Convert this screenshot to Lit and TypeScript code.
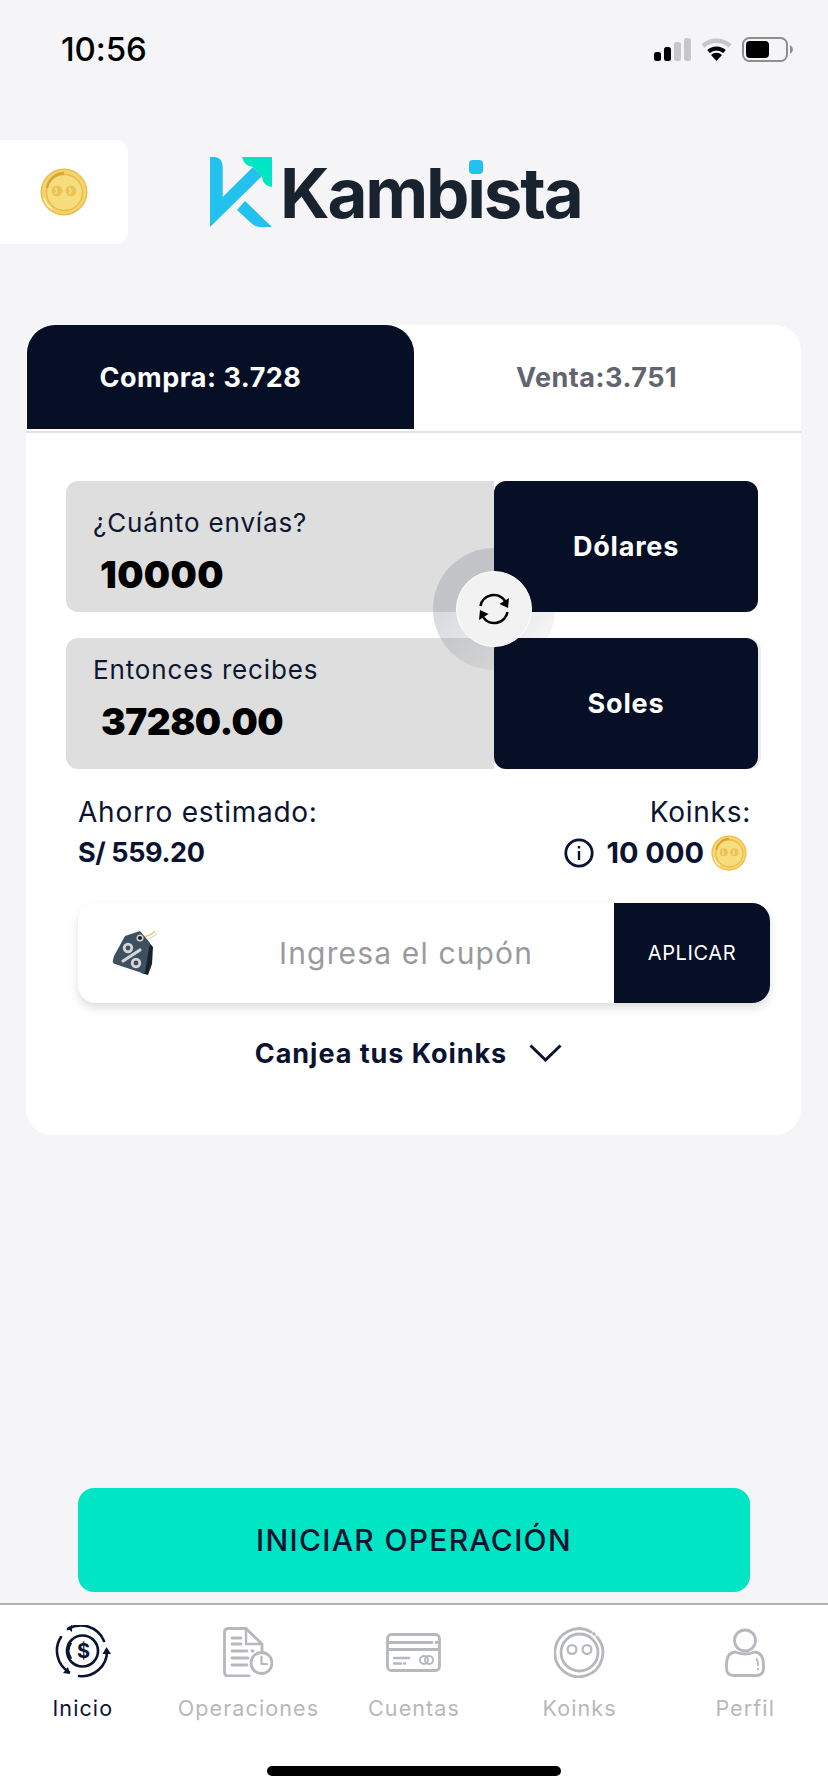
import { LitElement, html, css, svg } from "lit";
import { customElement } from "lit/decorators.js";

const coin = (size: number) => html`
  <svg width=${size} height=${size} viewBox="0 0 48 48">
    <circle cx="24" cy="24" r="23.5" fill="#e9bd4e" />
    <circle cx="24" cy="24" r="22" fill="#f6d469" />
    <circle cx="24.5" cy="24.5" r="18" fill="#f8dd7e" stroke="#e6bb4c" stroke-width="1.4" />
    <path d="M7 20 A18 18 0 0 1 24 5" fill="none" stroke="#d7a436" stroke-width="2.4" />
    <circle cx="17" cy="23" r="5.4" fill="#eac258" />
    <circle cx="31" cy="23" r="5.4" fill="#eac258" />
    <path d="M15 20 A3.5 3.5 0 0 1 15 26" fill="none" stroke="#f8dd7e" stroke-width="2" />
    <path d="M29 20 A3.5 3.5 0 0 1 29 26" fill="none" stroke="#f8dd7e" stroke-width="2" />
    <path d="M4 30 A21 21 0 0 0 12 41" fill="none" stroke="#fff3c2" stroke-width="1.6" />
  </svg>
`;

const logo = html`
  <svg class="logo-mark" width="62" height="70" viewBox="0 0 62 70">
    <path d="M0 0 H5 Q12.7 1 12.7 10 V40 L43 10 L52 19 L0 70 Z" fill="#22c1ee" />
    <path d="M32 0 H62 V30 Q53 29 52 20 L46 13 L43 10 Q34 9 32 0 Z" fill="#00e5c3" />
    <path d="M35 44 L27 53 L40 65 Q45 70 50 70 H62 Z" fill="#22c1ee" />
  </svg>
`;

const swapIcon = html`
  <svg width="36" height="36" viewBox="0 0 36 36" fill="none" stroke="#000" stroke-width="2.6">
    <path d="M4.5 15 A13.5 13.5 0 0 1 29 10" />
    <path d="M31.5 21 A13.5 13.5 0 0 1 7 26" />
    <path d="M33 7 L32 17 L23.5 13 Z" fill="#000" stroke="none" />
    <path d="M3 29 L4 19 L12.5 23 Z" fill="#000" stroke="none" />
  </svg>
`;

const tagIcon = html`
  <svg width="46" height="46" viewBox="0 0 46 46">
    <path d="M31 7 Q40 6 44 1" fill="none" stroke="#e8cf7a" stroke-width="1.5" />
    <path d="M33 10 Q42 8 46 3" fill="none" stroke="#d9d9d9" stroke-width="1.2" />
    <path d="M32 6 L42 17 L41 34 L37 45 L30 43 Z" fill="#17222d" />
    <path d="M14 6 L29 1 L39 13 L34 42 Q33 44 31 43 L4 34 Q1 33 2 30 L3 26 Z" fill="#3e5060" />
    <circle cx="29" cy="8" r="2.8" fill="#17222d" stroke="#d7d7d7" stroke-width="1.4" />
    <line x1="29" y1="20" x2="12" y2="31" stroke="#d4d5d7" stroke-width="3.2" stroke-linecap="round" />
    <circle cx="17" cy="18" r="3.8" fill="none" stroke="#d4d5d7" stroke-width="2.8" />
    <circle cx="25" cy="33" r="3.8" fill="none" stroke="#d4d5d7" stroke-width="2.8" />
  </svg>
`;

const iconInicio = svg`
  <g fill="none" stroke="#0a1430" stroke-width="2.6" stroke-linecap="round">
    <circle cx="28.5" cy="26" r="15.5" />
    <path d="M17 18.5 A13 13 0 0 0 17 33" stroke-width="1.8" />
    <path d="M14 4 A25 25 0 0 1 50 16" />
    <path d="M53 26 A25 25 0 0 1 25 51" />
    <path d="M7 12 A25 25 0 0 0 15 47" />
  </g>
  <g fill="#0a1430">
    <path d="M13 3 L18 0 L18 7 Z" />
    <path d="M52.5 22 L57 29 L48.5 29 Z" />
    <path d="M16 49 L9 48 L14 42 Z" />
    <text x="29.5" y="33" text-anchor="middle" font-family="Inter, sans-serif" font-size="20" font-weight="700">$</text>
  </g>
`;

const iconOperaciones = svg`
  <g fill="none" stroke="#b6b8bd" stroke-width="2.8" stroke-linecap="round" stroke-linejoin="round">
    <path d="M26 49 H5 Q1.5 49 1.5 45 V5 Q1.5 1.5 5 1.5 H23 L39 17 V25" />
    <path d="M23 1.5 V17 H39" stroke-width="2.4" />
    <path d="M9 11 H18 M9 17 H18 M9 24 H24 M29 24 H30 M9 31 H25 M9 38 H24" />
    <circle cx="38.5" cy="36" r="10.5" />
    <path d="M38.5 29.5 V37 H44" stroke-width="2.2" />
  </g>
`;

const iconCuentas = svg`
  <g fill="none" stroke="#b6b8bd" stroke-width="2.8" stroke-linecap="round">
    <rect x="1.5" y="1.5" width="52" height="36" rx="4" />
    <path d="M3 16.5 H52 M3 9.5 H46 M50 9.5 H51" />
    <path d="M8 25 H23 M8 30.5 H15 M18 30.5 H19" stroke-width="2.4" />
    <circle cx="38" cy="27" r="4" stroke-width="2" />
    <circle cx="43" cy="27" r="4" stroke-width="2" />
  </g>
`;

const iconKoinks = svg`
  <g fill="none" stroke="#b6b8bd" stroke-width="2.8" stroke-linecap="round">
    <path d="M37 5 A24 24 0 1 0 43 10" />
    <path d="M39.5 6.5 L40.5 7.5" />
    <circle cx="25.5" cy="25.5" r="18.5" />
    <circle cx="18" cy="22.5" r="4.4" stroke-width="2.2" />
    <circle cx="33" cy="22.5" r="4.4" stroke-width="2.2" />
  </g>
`;

const iconPerfil = svg`
  <g fill="none" stroke="#b6b8bd" stroke-width="2.8" stroke-linecap="round">
    <circle cx="20" cy="12.5" r="10.5" />
    <path d="M10 24 Q20 28 30 24 Q38.5 25 38.5 37 V40 Q38.5 47.5 31 47.5 H9 Q1.5 47.5 1.5 40 V37 Q1.5 25 10 24 Z" />
    <path d="M31.5 31 Q33 33 33 37 M33 41 V41.5" stroke-width="2" />
  </g>
`;

const tabs = [
  { label: "Inicio", active: true, w: 58, h: 54, icon: iconInicio },
  { label: "Operaciones", active: false, w: 50, h: 50, icon: iconOperaciones },
  { label: "Cuentas", active: false, w: 55, h: 39, icon: iconCuentas },
  { label: "Koinks", active: false, w: 51, h: 51, icon: iconKoinks },
  { label: "Perfil", active: false, w: 40, h: 49, icon: iconPerfil },
];

@customElement("app-root")
export class AppRoot extends LitElement {
  static styles = css`
    :host {
      display: flex;
      flex-direction: column;
      width: 828px;
      height: 1792px;
      background: #f5f5f7;
      font-family: Inter, "Liberation Sans", sans-serif;
      color: #0a1430;
      overflow: hidden;
    }
    * {
      box-sizing: border-box;
    }
    svg {
      display: block;
      flex: none;
    }

    /* status bar */
    .status {
      display: flex;
      justify-content: space-between;
      height: 62px;
      padding: 37px 34px 0 61px;
    }
    .time {
      font-size: 33px;
      line-height: 25px;
      font-weight: 500;
      letter-spacing: -0.1px;
      color: #000;
    }
    .status-icons {
      display: flex;
      gap: 10px;
      height: 25px;
      align-items: center;
    }

    /* header */
    .header {
      display: flex;
      align-items: center;
      margin-top: 78px;
    }
    .coin-card {
      display: flex;
      align-items: center;
      justify-content: center;
      width: 128px;
      height: 104px;
      background: #fff;
      border-radius: 0 12px 12px 0;
    }
    .logo {
      display: flex;
      align-items: flex-end;
      margin-left: 82px;
      gap: 8px;
    }
    .logo-text {
      font-size: 69px;
      line-height: 62px;
      font-weight: 700;
      letter-spacing: -2.2px;
      color: #18232f;
      transform: translateY(-3px);
    }
    .logo-i {
      position: relative;
    }
    .logo-i::after {
      content: "";
      position: absolute;
      left: 2px;
      top: 9px;
      width: 14px;
      height: 14px;
      border-radius: 4px;
      background: #22c1ee;
      box-shadow: 0 0 0 1px #f5f5f7;
    }

    /* exchange card */
    .card {
      width: 775px;
      height: 810px;
      margin: 81px 0 0 26px;
      background: #fff;
      border-radius: 26px;
      overflow: hidden;
    }
    .tabs {
      display: flex;
      height: 108px;
      padding-left: 1px;
      border-bottom: 2px solid #e3e3e3;
    }
    .tab {
      width: 387px;
      height: 104px;
      padding-top: 36px;
      text-align: center;
      font-size: 27px;
      line-height: 34px;
      font-weight: 700;
      letter-spacing: 0.5px;
    }
    .tab.on {
      background: #070f27;
      color: #fff;
      border-radius: 28px 28px 0 0;
      padding-right: 40px;
    }
    .tab.off {
      color: #62646e;
      flex: 1;
      padding-right: 22px;
    }
    .card-body {
      padding: 48px 0 0 40px;
    }

    .exchange {
      position: relative;
      width: 692px;
      display: flex;
      flex-direction: column;
      gap: 26px;
    }
    .row {
      display: flex;
      width: 692px;
      height: 131px;
    }
    .row-second {
      width: 697px;
    }
    .field {
      width: 428px;
      flex: none;
      background: #dedede;
      border-radius: 12px 0 0 12px;
      padding: 25px 0 0 27px;
    }
    .row-second .field {
      padding-top: 15px;
    }
    .field-label {
      font-size: 26px;
      line-height: 34px;
      letter-spacing: 0.85px;
      color: #0e1730;
    }
    .field-value {
      margin: 13px 0 0 7px;
      font-size: 37px;
      line-height: 44px;
      font-weight: 900;
      letter-spacing: 0.4px;
      color: #000;
    }
    .row-second .field-value {
      margin-left: 8px;
      margin-top: 13px;
      letter-spacing: -0.5px;
    }
    .currency {
      position: relative;
      z-index: 2;
      display: flex;
      align-items: center;
      justify-content: center;
      width: 264px;
      background: #070f27;
      border-radius: 12px;
      color: #fff;
      font-size: 27px;
      font-weight: 700;
      letter-spacing: 0.8px;
    }
    .row-second .currency {
      box-shadow: 3px 0 0 #ececee;
    }
    .halo {
      position: absolute;
      z-index: 1;
      left: 367px;
      top: 67px;
      width: 122px;
      height: 122px;
      border-radius: 50%;
      background: linear-gradient(135deg, rgba(130, 135, 145, 0.3) 30%, rgba(130, 135, 145, 0.08) 85%);
    }
    .swap {
      position: absolute;
      z-index: 3;
      left: 390px;
      top: 90px;
      width: 76px;
      height: 76px;
      border-radius: 50%;
      background: #f2f2f3;
      display: flex;
      align-items: center;
      justify-content: center;
      border: 1px solid #fff;
    }

    .summary {
      display: flex;
      justify-content: space-between;
      width: 673px;
      margin: 25px 0 0 12px;
      font-size: 28px;
      line-height: 36px;
    }
    .summary-col {
      display: flex;
      flex-direction: column;
      gap: 5px;
    }
    .summary-label {
      letter-spacing: 0.75px;
    }
    .summary-right {
      align-items: flex-end;
    }
    .saving {
      font-size: 27px;
      font-weight: 700;
      letter-spacing: -0.4px;
    }
    .koinks-line {
      display: flex;
      align-items: center;
      height: 36px;
      font-size: 29px;
      font-weight: 700;
    }
    .info {
      margin-right: 12px;
    }
    .mini-coin {
      margin-left: 7px;
      margin-right: 4px;
    }

    .coupon {
      display: flex;
      width: 692px;
      height: 100px;
      margin: 32px 0 0 12px;
      border-radius: 18px;
      background: #fff;
      box-shadow: 0 5px 10px rgba(0, 0, 0, 0.13);
    }
    .coupon-input {
      display: flex;
      align-items: center;
      flex: 1;
      padding-left: 33px;
    }
    .coupon-text {
      margin-left: 122px;
      font-size: 30px;
      letter-spacing: 1.15px;
      color: #9a9a9e;
    }
    .apply {
      display: flex;
      align-items: center;
      justify-content: center;
      width: 156px;
      background: #070f27;
      border-radius: 0 18px 18px 0;
      color: #fff;
      font-size: 20px;
      letter-spacing: 0.6px;
    }
    .redeem {
      display: flex;
      align-items: center;
      justify-content: center;
      gap: 22px;
      width: 692px;
      margin: 33px 0 0 0;
      padding-right: 7px;
      height: 34px;
      font-size: 27px;
      font-weight: 700;
      letter-spacing: 0.95px;
    }

    /* bottom */
    .cta {
      display: flex;
      align-items: center;
      justify-content: center;
      width: 672px;
      height: 104px;
      margin: auto 0 11px 78px;
      background: #00e5c3;
      border-radius: 16px;
      font-size: 30px;
      font-weight: 500;
      letter-spacing: 1.3px;
    }
    .nav {
      display: grid;
      grid-template-columns: repeat(5, 1fr);
      height: 189px;
      background: #fff;
      border-top: 2px solid #b2b2b6;
      position: relative;
    }
    .nav-item {
      display: flex;
      flex-direction: column;
      align-items: center;
    }
    .nav-icon {
      display: flex;
      align-items: center;
      justify-content: center;
      height: 54px;
      margin-top: 20px;
    }
    .nav-label {
      margin-top: 15px;
      font-size: 21.5px;
      line-height: 28px;
      letter-spacing: 1.1px;
      color: #b6b8bd;
    }
    .nav-item.on .nav-label {
      color: #0a1430;
    }
    .home-bar {
      position: absolute;
      left: 267px;
      top: 161px;
      width: 294px;
      height: 10px;
      border-radius: 5px;
      background: #000;
    }
  `;

  render() {
    return html`
      <div class="status">
        <div class="time">10:56</div>
        <div class="status-icons">
          <svg width="37" height="23" viewBox="0 0 37 23">
            <rect x="0" y="14" width="7" height="9" rx="2.5" fill="#000" />
            <rect x="10" y="9" width="7" height="14" rx="2.5" fill="#000" />
            <rect x="20" y="4" width="7" height="19" rx="2.5" fill="#c6c7c9" />
            <rect x="30" y="0" width="7" height="23" rx="2.5" fill="#c6c7c9" />
          </svg>
          <svg width="31" height="23" viewBox="0 0 31 23" fill="none">
            <path d="M2 8 A20 20 0 0 1 29 8" stroke="#c6c7c9" stroke-width="4.5" />
            <path d="M7.5 13.5 A12 12 0 0 1 23.5 13.5" stroke="#000" stroke-width="4" />
            <path d="M10 17 A8 8 0 0 1 21 17 L15.5 23 Z" fill="#000" />
          </svg>
          <svg width="52" height="25" viewBox="0 0 52 25">
            <rect x="1" y="1" width="44" height="23" rx="6.5" fill="none" stroke="#8e8e91" stroke-width="2" />
            <rect x="4" y="4" width="23" height="17" rx="4" fill="#000" />
            <path d="M48 8 Q51 10 51 12.5 Q51 15 48 17 Z" fill="#8e8e91" />
          </svg>
        </div>
      </div>

      <div class="header">
        <div class="coin-card">${coin(48)}</div>
        <div class="logo">
          ${logo}
          <div class="logo-text">Kamb<span class="logo-i">i</span>sta</div>
        </div>
      </div>

      <div class="card">
        <div class="tabs">
          <div class="tab on">Compra: 3.728</div>
          <div class="tab off">Venta:3.751</div>
        </div>
        <div class="card-body">
          <div class="exchange">
            <div class="row">
              <div class="field">
                <div class="field-label">¿Cuánto envías?</div>
                <div class="field-value">10000</div>
              </div>
              <div class="currency">Dólares</div>
            </div>
            <div class="row row-second">
              <div class="field">
                <div class="field-label">Entonces recibes</div>
                <div class="field-value">37280.00</div>
              </div>
              <div class="currency">Soles</div>
            </div>
            <div class="halo"></div>
            <div class="swap">${swapIcon}</div>
          </div>

          <div class="summary">
            <div class="summary-col">
              <div class="summary-label">Ahorro estimado:</div>
              <div class="saving">S/ 559.20</div>
            </div>
            <div class="summary-col summary-right">
              <div class="summary-label">Koinks:</div>
              <div class="koinks-line">
                <svg class="info" width="30" height="30" viewBox="0 0 30 30" fill="none" stroke="#0a1430">
                  <circle cx="15" cy="15" r="13.2" stroke-width="2.8" />
                  <path d="M15 13 V22" stroke-width="2.4" />
                  <path d="M15 8 V10.5" stroke-width="2.4" />
                </svg>
                <span>10 000</span>
                <span class="mini-coin">${coin(36)}</span>
              </div>
            </div>
          </div>

          <div class="coupon">
            <div class="coupon-input">
              ${tagIcon}
              <span class="coupon-text">Ingresa el cupón</span>
            </div>
            <div class="apply">APLICAR</div>
          </div>

          <div class="redeem">
            <span>Canjea tus Koinks</span>
            <svg width="33" height="18" viewBox="0 0 33 18" fill="none" stroke="#0a1430" stroke-width="3">
              <path d="M1.5 1.5 L16.5 16 L31.5 1.5" />
            </svg>
          </div>
        </div>
      </div>

      <div class="cta">INICIAR OPERACIÓN</div>

      <div class="nav">
        ${tabs.map(
          (t) => html`
            <div class="nav-item ${t.active ? "on" : ""}">
              <div class="nav-icon">
                <svg width=${t.w} height=${t.h} viewBox="0 0 ${t.w} ${t.h}">${t.icon}</svg>
              </div>
              <div class="nav-label">${t.label}</div>
            </div>
          `
        )}
        <div class="home-bar"></div>
      </div>
    `;
  }
}
